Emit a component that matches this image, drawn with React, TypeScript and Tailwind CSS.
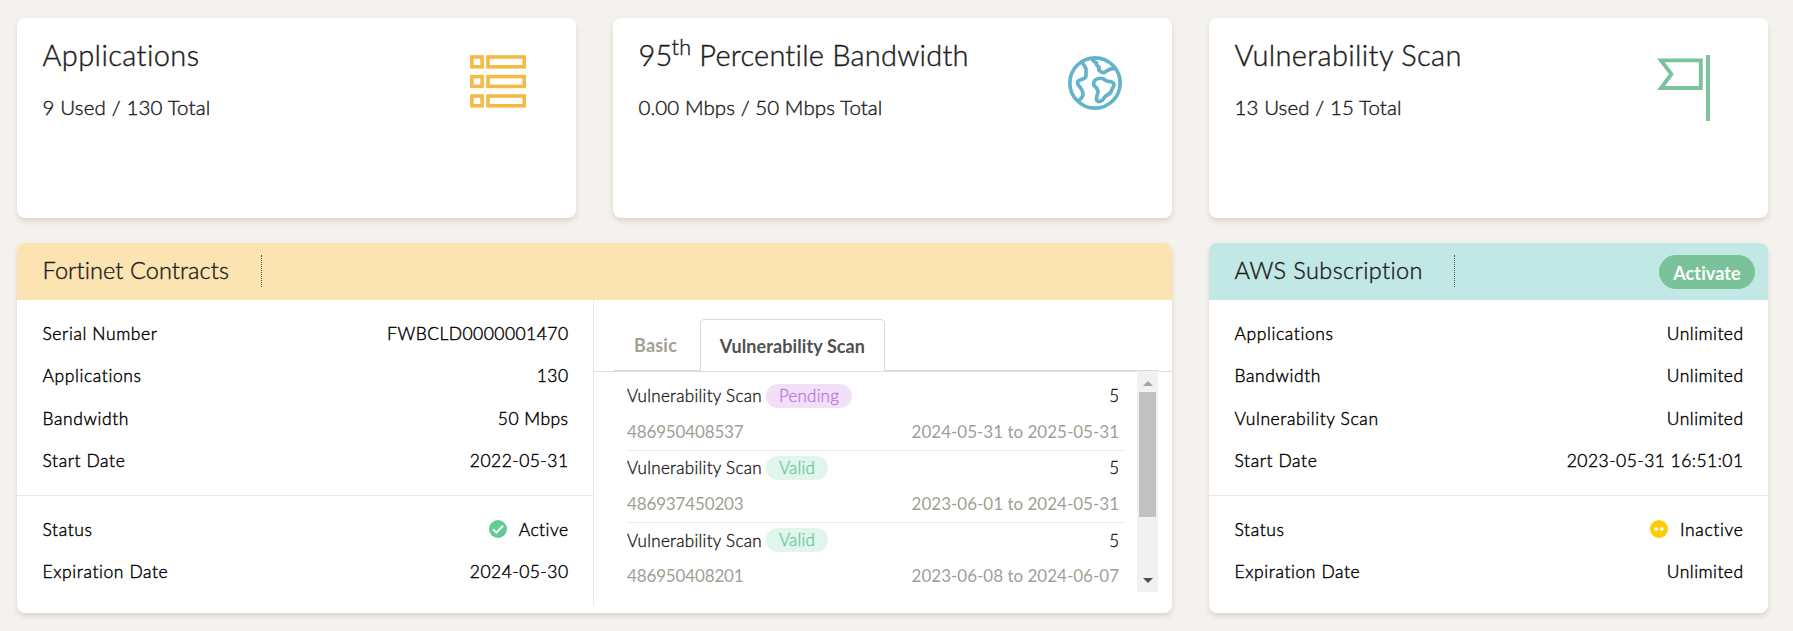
import React, { type ReactNode } from "react";

function ListIcon() {
  return (
    <svg width="56" height="54" viewBox="0 0 56 54" fill="none" stroke="#f4ba44" strokeWidth="3.6">
      {[2, 21.6, 41].map((y) => (
        <g key={y}>
          <rect x="1.9" y={y} width="10.2" height="9.8" />
          <rect x="18" y={y} width="36.2" height="9.8" />
        </g>
      ))}
    </svg>
  );
}

function GlobeIcon() {
  return (
    <svg width="54" height="54" viewBox="52 48 162 162" fill="none" stroke="#65b3cb" strokeWidth="11" strokeLinejoin="round">
      <circle cx="133" cy="129" r="75.5" />
      <path d="M94 67 L104 82 Q108 88 106 96 V108 Q104 115 96 117 L84 122 Q79 126 82 134 L90 144 Q97 154 97 163 Q97 173 82 184" />
      <path d="M124 58 Q131 66 138 69 Q135 76 145 81 Q142 90 150 95 Q159 102 168 93 Q178 85 198 85" />
      <path d="M132 121 Q142 112 158 116 Q165 125 182 125 Q193 129 189 139 Q185 144 182 153 Q178 163 166 167 Q160 172 156 180 Q145 189 138 181 Q136 172 141 160 Q144 150 136 142 Q124 135 132 121 Z" />
    </svg>
  );
}

function FlagIcon() {
  return (
    <svg width="54" height="66" viewBox="0 0 54 66" fill="none" stroke="#7ac29a" strokeWidth="3.9">
      <path d="M4 5.4 H43.8 V33 H4 L14.4 19.2 Z" />
      <path d="M51 0 V66" />
    </svg>
  );
}

function StatusIcon({ active }: { active: boolean }) {
  return active ? (
    <svg width="18" height="18" viewBox="0 0 18 18" fill="none">
      <circle cx="9" cy="9" r="9" fill="#63cb97" />
      <path d="M4 9.2 L7.4 12.6 L14 5.6" stroke="#fff" strokeWidth="2" />
    </svg>
  ) : (
    <svg width="18" height="18" viewBox="0 0 18 18">
      <circle cx="9" cy="9" r="9" fill="#ffcb05" />
      <path d="M4.4 7.4 h3.6 v3 h-3.6z M10 7.4 h3.4 v3 h-3.4z" fill="#fff" />
    </svg>
  );
}

const card = "rounded-[8px] bg-white shadow-[0_3px_5px_rgba(190,178,160,0.45)]";
const heading = "whitespace-nowrap font-light text-[#1c1c1c] [-webkit-text-stroke:0.4px_#1c1c1c]";

function StatCard({ title, titleClass, sub, subClass, icon, iconClass }: { title: ReactNode; titleClass: string; sub: string; subClass: string; icon: ReactNode; iconClass: string }) {
  return (
    <section className={`${card} flex h-[200px] justify-between pl-[25.5px]`}>
      <div>
        <h2 className={`mt-[17px] h-10 text-[29px] leading-[40px] ${heading} ${titleClass}`}>{title}</h2>
        <p className={`mt-[17px] text-[20.5px] leading-[30px] ${heading} ${subClass}`}>{sub}</p>
      </div>
      <div className={iconClass}>{icon}</div>
    </section>
  );
}

function Row({ label, children }: { label: string; children: ReactNode }) {
  return (
    <div className="flex h-[42.4px] items-center justify-between pl-[25.5px] pr-[25px] text-[17.5px] font-light text-black [-webkit-text-stroke:0.42px_#000]">
      <span className="tracking-[0.6px]">{label}</span>
      <span className="-mr-[0.5px] flex items-center tracking-[0.45px]">{children}</span>
    </div>
  );
}

function Details({ rows, active, expires }: { rows: [string, string][]; active: boolean; expires: string }) {
  return (
    <>
      <div className="h-[195px] pt-[12.7px]">
        {rows.map(([k, v]) => (
          <Row key={k} label={k}>{v}</Row>
        ))}
      </div>
      <div className="border-t border-[#e9e7e1] pt-[12.7px]">
        <Row label="Status">
          <span className="mb-[2px] mr-[12px]"><StatusIcon active={active} /></span>
          {active ? "Active" : <span className="tracking-[0.65px]">Inactive</span>}
        </Row>
        <Row label="Expiration Date">{expires}</Row>
      </div>
    </>
  );
}

const scans = [
  { state: "Pending", id: "486950408537", range: "2024-05-31 to 2025-05-31", top: "h-[42px] pt-[6px]", bottom: "h-[37px] border-b", name: "" },
  { state: "Valid", id: "486937450203", range: "2023-06-01 to 2024-05-31", top: "h-[34px]", bottom: "h-[38px] border-b", name: "" },
  { state: "Valid", id: "486950408201", range: "2023-06-08 to 2024-06-07", top: "h-[34px]", bottom: "h-[38px]", name: "pt-[2px]" },
];

function Scans() {
  return (
    <div className="flex-1">
      <div className="flex h-[71px] items-end pl-[20px] pr-[14px] pt-[19px]">
        <div className="flex h-[52px] w-[86px] items-center border-b border-[#d9d9d9] pl-[20px] pt-[2px] text-[18px] font-bold tracking-[0.2px] text-[#a3a093]">Basic</div>
        <div className="flex h-[52px] w-[185px] items-center justify-center whitespace-nowrap rounded-t-[5px] border border-b-0 border-[#d9d9d9] pt-px text-[18px] font-bold tracking-[0.1px] text-[#505050]">Vulnerability Scan</div>
        <div className="h-[52px] flex-1 border-b border-[#d9d9d9]" />
      </div>
      <div className="flex">
        <div className="flex-1 border-t border-[#dedede] pl-[33px]">
          <div className="w-[498px] text-[17px]">
            {scans.map((s) => (
              <div key={s.id}>
                <div className={`flex items-center justify-between pr-[6px] font-light text-[#1c1c1c] [-webkit-text-stroke:0.35px_currentColor] ${s.top}`}>
                  <span className="flex items-center">
                    <span className={`w-[139px] whitespace-nowrap tracking-[0.3px] ${s.name}`}>Vulnerability Scan</span>
                    <span className={`flex h-6 items-center justify-center rounded-full ${s.state === "Pending" ? "w-[86px] bg-[#f1e0f8] tracking-[0.2px] text-[#be7be0]" : "w-[62px] bg-[#e0f5ec] tracking-[0.2px] text-[#6bc99c]"}`}>{s.state}</span>
                  </span>
                  <span className={s.name}>5</span>
                </div>
                <div className={`flex items-center justify-between border-[#ebebeb] pr-[6px] text-[#a19f95] ${s.bottom}`}>
                  <span className="tracking-[-0.15px]">{s.id}</span>
                  <span>{s.range}</span>
                </div>
              </div>
            ))}
          </div>
        </div>
        <div className="flex h-[221px] w-[21px] flex-col items-center bg-[#f1f1f1]">
          <div className="flex h-[21px] items-center pt-[3px]">
            <svg width="10" height="5" viewBox="0 0 10 5"><path d="M0 5 L5 0 L10 5Z" fill="#a3a3a3" /></svg>
          </div>
          <div className="h-[125px] w-[17px] bg-[#c1c1c1]" />
          <div className="flex flex-1 items-end pb-[9px]">
            <svg width="10" height="5" viewBox="0 0 10 5"><path d="M0 0 L5 5 L10 0Z" fill="#505050" /></svg>
          </div>
        </div>
        <div className="w-[14px] border-t border-[#dedede]" />
      </div>
    </div>
  );
}

export default function App() {
  return (
    <main className="grid h-[631px] w-[1793px] grid-cols-[559px_559px_559px] grid-rows-[200px_370px] content-start gap-x-[37px] gap-y-[25px] overflow-hidden bg-[#f4f2ee] pl-[17px] pt-[18px] font-[Lato,sans-serif]">
      <StatCard title="Applications" titleClass="tracking-[0.4px]" sub="9 Used / 130 Total" subClass="tracking-[0.15px]" icon={<ListIcon />} iconClass="pr-[50px] pt-[37px]" />
      <StatCard
        title={<>95<sup className="-top-[11px] -ml-px text-[21.5px] leading-none">th</sup> Percentile Bandwidth</>}
        titleClass="tracking-[0.22px]"
        sub="0.00 Mbps / 50 Mbps Total"
        subClass="tracking-[0.08px]"
        icon={<GlobeIcon />}
        iconClass="pr-[50px] pt-[38px]"
      />
      <StatCard title="Vulnerability Scan" titleClass="tracking-[0.35px]" sub="13 Used / 15 Total" subClass="tracking-[0.1px]" icon={<FlagIcon />} iconClass="pr-[57px] pt-[37px]" />

      <section className={`${card} col-span-2`}>
        <header className="flex h-[57px] items-center rounded-t-[8px] bg-[#fce4b2] pl-[25.5px]">
          <h3 className={`w-[218.5px] pb-[2px] text-[23.5px] tracking-[0.1px] ${heading}`}>Fortinet Contracts</h3>
          <div className="mb-px h-8 border-l border-dotted border-[#555]" />
        </header>
        <div className="flex">
          <div className="h-[306px] w-[577px] border-r border-[#ebe8e2]">
            <Details
              rows={[["Serial Number", "FWBCLD0000001470"], ["Applications", "130"], ["Bandwidth", "50 Mbps"], ["Start Date", "2022-05-31"]]}
              active
              expires="2024-05-30"
            />
          </div>
          <Scans />
        </div>
      </section>

      <section className={card}>
        <header className="flex h-[57px] items-center rounded-t-[8px] bg-[#c1e8e4] pl-[25.5px] pr-[13px]">
          <h3 className={`w-[219.5px] pb-[2px] text-[23.5px] tracking-[0.38px] ${heading}`}>AWS Subscription</h3>
          <div className="mb-px h-8 border-l border-dotted border-[#555]" />
          <button className="ml-auto mt-px h-[34px] w-[96px] rounded-full bg-[#7ac29a] pt-[2px] text-[18px] font-bold tracking-[0.1px] text-white">Activate</button>
        </header>
        <Details
          rows={[["Applications", "Unlimited"], ["Bandwidth", "Unlimited"], ["Vulnerability Scan", "Unlimited"], ["Start Date", "2023-05-31 16:51:01"]]}
          active={false}
          expires="Unlimited"
        />
      </section>
    </main>
  );
}
